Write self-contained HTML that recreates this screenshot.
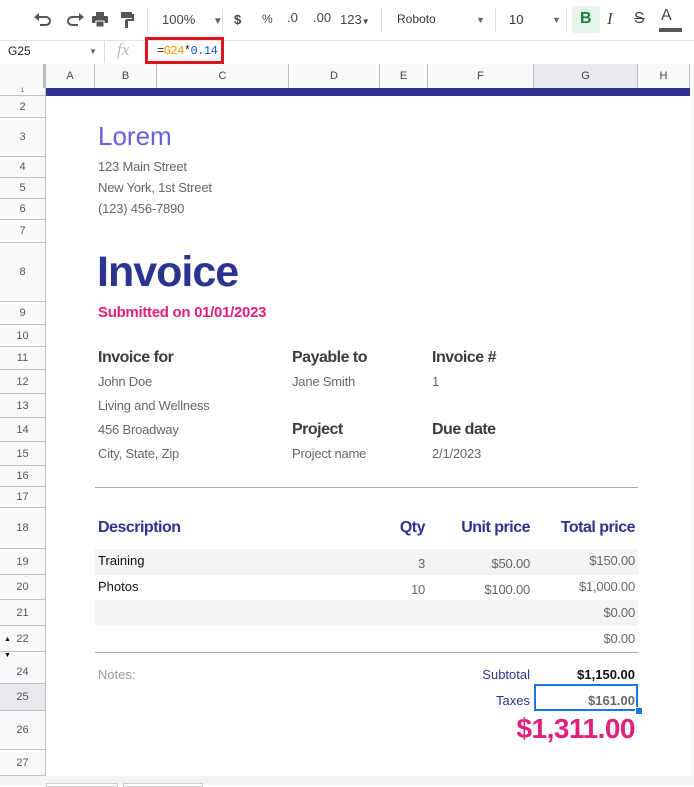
<!DOCTYPE html>
<html><head><style>
body{margin:0;width:694px;height:785px;overflow:hidden;background:#fff;font-family:"Liberation Sans",Arial,sans-serif;position:relative}
.a{position:absolute;white-space:nowrap}
.rh{position:absolute;left:0;width:45px;text-align:center;font-size:11px;color:#555;border-bottom:1px solid #c0c0c0;background:#f8f9fa;box-sizing:border-box}
.ch{position:absolute;top:64px;height:24px;line-height:24px;text-align:center;font-size:11px;color:#444;border-right:1px solid #c0c0c0;box-sizing:border-box;background:#f8f9fa}
.g{color:#666;font-size:13px;letter-spacing:-0.2px}
.h{color:#3c3c3c;font-size:16px;font-weight:bold;letter-spacing:-0.5px}
.b{color:#2b3590;font-size:16px;font-weight:bold;letter-spacing:-0.5px}
.tb{font-size:15px;color:#444}
</style></head><body>
<!-- toolbar -->
<div class="a" style="left:0;top:0;width:694px;height:40px;background:#fff;border-bottom:1px solid #e0e0e0"></div>
<svg class="a" style="left:30px;top:8px" width="116" height="24" viewBox="0 0 116 24">
<path d="M8 9 H16 a4 4 0 0 1 0 8 H10" fill="none" stroke="#555" stroke-width="2"/><path d="M4 9 L9 5 L9 13 Z" fill="#555"/>
<path d="M50 9 H42 a4 4 0 0 0 0 8 H48" fill="none" stroke="#555" stroke-width="2"/><path d="M54 9 L49 5 L49 13 Z" fill="#555"/>
<rect x="66" y="4" width="8" height="4" fill="#555"/><rect x="62" y="8" width="16" height="7" rx="1" fill="#555"/><rect x="66" y="13" width="8" height="6" fill="#555" stroke="#fff" stroke-width="1"/>
<rect x="91" y="4" width="11" height="6" fill="#555"/><rect x="102" y="6" width="2" height="6" fill="#555"/><rect x="96" y="11" width="8" height="2" fill="#555"/><rect x="95" y="12" width="3" height="8" fill="#555"/>
</svg>
<div class="a" style="left:147px;top:8px;width:1px;height:24px;background:#ddd"></div>
<div class="a tb" style="left:162px;top:12px;font-size:13px">100% <span style="margin-left:14px;font-size:10px;color:#666">▼</span></div>
<div class="a" style="left:222px;top:8px;width:1px;height:24px;background:#ddd"></div>
<div class="a tb" style="left:234px;top:12px;font-size:13px;font-weight:bold">$</div>
<div class="a tb" style="left:262px;top:12px;font-size:12px">%</div>
<div class="a tb" style="left:287px;top:10px;font-size:13px">.0</div>
<div class="a tb" style="left:313px;top:10px;font-size:13px">.00</div>
<div class="a tb" style="left:340px;top:12px;font-size:13px">123<span style="font-size:8px">▼</span></div>
<div class="a" style="left:381px;top:8px;width:1px;height:24px;background:#ddd"></div>
<div class="a tb" style="left:397px;top:12px;font-size:12px;color:#333">Roboto</div>
<div class="a" style="left:476px;top:15px;font-size:9px;color:#666">▼</div>
<div class="a" style="left:495px;top:8px;width:1px;height:24px;background:#ddd"></div>
<div class="a tb" style="left:509px;top:12px;font-size:13px;color:#333">10</div>
<div class="a" style="left:552px;top:15px;font-size:9px;color:#666">▼</div>
<div class="a" style="left:566px;top:8px;width:1px;height:24px;background:#ddd"></div>
<div class="a" style="left:572px;top:6px;width:28px;height:27px;background:#e6f4ea;border-radius:3px"></div>
<div class="a" style="left:580px;top:10px;font-size:16px;font-weight:bold;color:#188038">B</div>
<div class="a" style="left:607px;top:9px;font-size:17px;font-style:italic;color:#444;font-family:'Liberation Serif',serif">I</div>
<div class="a" style="left:634px;top:10px;font-size:16px;color:#444;text-decoration:line-through">S</div>
<div class="a" style="left:661px;top:7px;font-size:16px;color:#444">A</div>
<div class="a" style="left:659px;top:28px;width:23px;height:4px;background:#555"></div>
<!-- formula bar -->
<div class="a" style="left:0;top:40px;width:694px;height:24px;border-bottom:1px solid #c0c0c0"></div>
<div class="a" style="left:8px;top:44px;font-size:12px;color:#222">G25</div>
<div class="a" style="left:89px;top:47px;font-size:8px;color:#666">▼</div>
<div class="a" style="left:104px;top:41px;width:1px;height:22px;background:#ddd"></div>
<div class="a" style="left:117px;top:40px;font-size:17px;color:#bbb;font-style:italic;font-family:'Liberation Serif',serif">fx</div>
<div class="a" style="left:145px;top:37px;width:79px;height:27px;border:3px solid #e0141c;box-sizing:border-box"></div>
<div class="a" style="left:157px;top:44px;font-size:12px;font-family:'Liberation Mono',monospace;color:#222;letter-spacing:-0.5px">=<span style="color:#f09300">G24</span>*<span style="color:#1155cc">0.14</span></div>
<!-- column headers -->
<div class="a" style="left:0;top:64px;width:694px;height:24px;background:#f8f9fa;border-bottom:1px solid #c0c0c0"></div>
<div class="a" style="left:43px;top:64px;width:3px;height:24px;background:#bbb"></div>
<div class="ch" style="left:46px;width:49px">A</div>
<div class="ch" style="left:95px;width:62px">B</div>
<div class="ch" style="left:157px;width:132px">C</div>
<div class="ch" style="left:289px;width:91px">D</div>
<div class="ch" style="left:380px;width:48px">E</div>
<div class="ch" style="left:428px;width:106px">F</div>
<div class="ch" style="left:534px;width:104px;background:#e8eaed">G</div>
<div class="ch" style="left:638px;width:52px">H</div>
<!-- row headers -->
<div class="a" style="left:0;top:88px;width:46px;height:688px;background:#f8f9fa;border-right:1px solid #c0c0c0;box-sizing:border-box"></div>
<div class="rh" style="top:88px;height:8px;font-size:6px;line-height:6px">1</div>
<div class="rh" style="top:96px;height:22px;line-height:22px">2</div>
<div class="rh" style="top:118px;height:39px;line-height:39px">3</div>
<div class="rh" style="top:157px;height:21px;line-height:21px">4</div>
<div class="rh" style="top:178px;height:21px;line-height:21px">5</div>
<div class="rh" style="top:199px;height:21px;line-height:21px">6</div>
<div class="rh" style="top:220px;height:23px;line-height:23px">7</div>
<div class="rh" style="top:243px;height:59px;line-height:59px">8</div>
<div class="rh" style="top:302px;height:23px;line-height:23px">9</div>
<div class="rh" style="top:325px;height:22px;line-height:22px">10</div>
<div class="rh" style="top:347px;height:23px;line-height:23px">11</div>
<div class="rh" style="top:370px;height:24px;line-height:24px">12</div>
<div class="rh" style="top:394px;height:24px;line-height:24px">13</div>
<div class="rh" style="top:418px;height:24px;line-height:24px">14</div>
<div class="rh" style="top:442px;height:24px;line-height:24px">15</div>
<div class="rh" style="top:466px;height:21px;line-height:21px">16</div>
<div class="rh" style="top:487px;height:21px;line-height:21px">17</div>
<div class="rh" style="top:508px;height:41px;line-height:41px">18</div>
<div class="rh" style="top:549px;height:26px;line-height:26px">19</div>
<div class="rh" style="top:575px;height:25px;line-height:25px">20</div>
<div class="rh" style="top:600px;height:26px;line-height:26px">21</div>
<div class="rh" style="top:626px;height:26px;line-height:26px">22</div>
<div class="rh" style="top:652px;height:32px;line-height:40px">24</div>
<div class="rh" style="top:684px;height:27px;line-height:27px;background:#e8eaed">25</div>
<div class="rh" style="top:711px;height:39px;line-height:39px">26</div>
<div class="rh" style="top:750px;height:26px;line-height:26px">27</div>
<div class="a" style="left:4px;top:636px;font-size:7px">▲</div>
<div class="a" style="left:4px;top:652px;font-size:7px">▼</div>
<div class="a" style="left:0;top:776px;width:694px;height:9px;background:#f1f3f4"></div>
<div class="a" style="left:46px;top:783px;width:70px;height:2px;border:1px solid #ccc;background:#fff"></div>
<div class="a" style="left:123px;top:783px;width:78px;height:2px;border:1px solid #ccc;background:#fff"></div>
<div class="a" style="left:690px;top:88px;width:4px;height:688px;background:#f8f9fa"></div>
<!-- sheet -->
<div class="a" style="left:46px;top:88px;width:644px;height:8px;background:#2b3590"></div>
<div class="a" style="left:98px;top:121px;font-size:26px;color:#6b5fe0">Lorem</div>
<div class="a g" style="left:98px;top:159px">123 Main Street</div>
<div class="a g" style="left:98px;top:180px">New York, 1st Street</div>
<div class="a g" style="left:98px;top:201px">(123) 456-7890</div>
<div class="a" style="left:97px;top:248px;font-size:43px;font-weight:bold;color:#2b3590;letter-spacing:-1px">Invoice</div>
<div class="a" style="left:98px;top:304px;font-size:15px;font-weight:bold;color:#e0207a;letter-spacing:-0.3px">Submitted on 01/01/2023</div>
<div class="a h" style="left:98px;top:349px">Invoice for</div>
<div class="a h" style="left:292px;top:349px">Payable to</div>
<div class="a h" style="left:432px;top:349px">Invoice #</div>
<div class="a g" style="left:98px;top:374px">John Doe</div>
<div class="a g" style="left:292px;top:374px">Jane Smith</div>
<div class="a g" style="left:432px;top:374px">1</div>
<div class="a g" style="left:98px;top:398px">Living and Wellness</div>
<div class="a g" style="left:98px;top:422px">456 Broadway</div>
<div class="a h" style="left:292px;top:421px">Project</div>
<div class="a h" style="left:432px;top:421px">Due date</div>
<div class="a g" style="left:98px;top:446px">City, State, Zip</div>
<div class="a g" style="left:292px;top:446px">Project name</div>
<div class="a g" style="left:432px;top:446px">2/1/2023</div>
<div class="a" style="left:95px;top:487px;width:543px;height:1px;background:#aaa"></div>
<div class="a b" style="left:98px;top:519px">Description</div>
<div class="a b" style="right:269px;top:519px">Qty</div>
<div class="a b" style="right:164px;top:519px">Unit price</div>
<div class="a b" style="right:59px;top:519px">Total price</div>
<div class="a" style="left:95px;top:549px;width:543px;height:26px;background:#f3f3f3"></div>
<div class="a" style="left:95px;top:600px;width:543px;height:26px;background:#f3f3f3"></div>
<div class="a" style="left:98px;top:553px;font-size:13px;color:#111">Training</div>
<div class="a g" style="right:269px;top:556px">3</div>
<div class="a g" style="right:164px;top:556px">$50.00</div>
<div class="a g" style="right:59px;top:553px">$150.00</div>
<div class="a" style="left:98px;top:579px;font-size:13px;color:#111">Photos</div>
<div class="a g" style="right:269px;top:582px">10</div>
<div class="a g" style="right:164px;top:582px">$100.00</div>
<div class="a g" style="right:59px;top:579px">$1,000.00</div>
<div class="a g" style="right:59px;top:605px">$0.00</div>
<div class="a g" style="right:59px;top:631px">$0.00</div>
<div class="a" style="left:95px;top:652px;width:543px;height:1px;background:#aaa"></div>
<div class="a" style="left:98px;top:667px;font-size:13px;color:#999">Notes:</div>
<div class="a" style="right:164px;top:667px;font-size:13px;color:#2b3590">Subtotal</div>
<div class="a" style="right:59px;top:667px;font-size:13px;font-weight:bold;color:#111">$1,150.00</div>
<div class="a" style="right:164px;top:693px;font-size:13px;color:#2b3590">Taxes</div>
<div class="a" style="left:534px;top:684px;width:104px;height:27px;border:2px solid #1a73e8;box-sizing:border-box"></div>
<div class="a" style="left:635px;top:707px;width:6px;height:6px;background:#1a73e8;border:1px solid #fff"></div>
<div class="a" style="right:59px;top:693px;font-size:13px;font-weight:bold;color:#666">$161.00</div>
<div class="a" style="right:59px;top:713px;font-size:28px;font-weight:bold;color:#e0207a;letter-spacing:-0.5px">$1,311.00</div>
</body></html>
